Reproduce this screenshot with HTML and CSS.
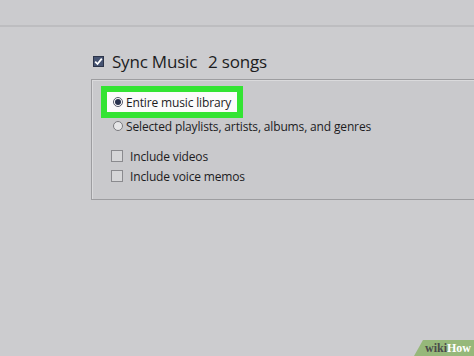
FILE: index.html
```html
<!DOCTYPE html>
<html>
<head>
<meta charset="utf-8">
<link rel="stylesheet" href="styles.css">
</head>
<body>
<div class="titlebar"></div>
<div class="main">
  <div class="sync-row">
    <span class="check checked">
      <svg width="11" height="11" viewBox="0 0 11 11"><path d="M2.2 5.6 L4.5 8 L8.8 2.6" fill="none" stroke="#fff" stroke-width="1.8"/></svg>
    </span>
    <span class="sync-label">Sync Music</span>
    <span class="sync-count">2 songs</span>
  </div>
  <div class="panel">
    <div class="highlight">
      <span class="radio on"><span class="dot"></span></span>
      <span class="opt-label">Entire music library</span>
    </div>
    <div class="opt-row radio-row">
      <span class="radio"></span>
      <span class="opt-label">Selected playlists, artists, albums, and genres</span>
    </div>
    <div class="opt-row box-row first-box">
      <span class="box"></span>
      <span class="opt-label">Include videos</span>
    </div>
    <div class="opt-row box-row">
      <span class="box"></span>
      <span class="opt-label">Include voice memos</span>
    </div>
  </div>
</div>
<div class="badge"><span class="wiki">wiki</span><span class="how">How</span></div>
</body>
</html>
```
FILE: styles.css
```css
html, body {
  margin: 0;
  padding: 0;
}
body {
  width: 474px;
  height: 356px;
  overflow: hidden;
  background: #cccccf;
  font-family: "Open Sans", "Noto Sans", sans-serif;
  color: #1c1c1e;
  position: relative;
}
.titlebar {
  height: 25px;
  background: #cbcbce;
  border-bottom: 2px solid #bdbdc0;
}
.main {
  padding-top: 24px;
}
.sync-row {
  display: flex;
  align-items: center;
  margin-left: 93px;
  height: 20px;
}
.check {
  width: 11px;
  height: 11px;
  box-sizing: border-box;
  display: inline-flex;
  border: 1px solid #2c3449;
  background: #465372;
}
.check svg { display: block; margin: -1px; }
.sync-label {
  font-size: 17px;
  margin-left: 8px;
  letter-spacing: -0.2px;
}
.sync-count {
  font-size: 17px;
  margin-left: 11px;
  letter-spacing: -0.2px;
}
.panel {
  margin-top: 8px;
  margin-left: 91px;
  height: 121px;
  border: 1px solid #9d9da0;
  border-right: none;
  box-shadow: inset 1px 1px 0 #dadadc;
  background: #c9c9cc;
  box-sizing: border-box;
  padding-top: 6px;
  padding-left: 9px;
}
.highlight {
  display: flex;
  align-items: center;
  width: 142px;
  height: 32px;
  box-sizing: border-box;
  border: 6px solid #33e433;
  background: #fbfbfb;
  padding-left: 6px;
}
.opt-label {
  font-size: 12px;
  letter-spacing: -0.15px;
  white-space: nowrap;
}
.highlight .opt-label {
  margin-left: 3px;
}
.radio {
  width: 10px;
  height: 10px;
  border-radius: 50%;
  border: 1px solid #7a7a7e;
  background: #e6e6e8;
  box-sizing: border-box;
  display: inline-flex;
  align-items: center;
  justify-content: center;
  flex: none;
}
.radio.on {
  background: #ffffff;
  border-color: #55596a;
}
.dot {
  width: 6px;
  height: 6px;
  border-radius: 50%;
  background: #28324d;
}
.opt-row {
  display: flex;
  align-items: center;
}
.radio-row {
  margin-left: 12px;
  height: 16px;
}
.radio-row .opt-label { margin-left: 3px; }
.box-row {
  margin-left: 10px;
  height: 20px;
}
.first-box { margin-top: 12px; }
.box {
  width: 12px;
  height: 12px;
  box-sizing: border-box;
  border: 1px solid #8a8a8e;
  background: #d6d6d8;
  flex: none;
}
.box-row .opt-label { margin-left: 7px; }
.badge {
  position: absolute;
  right: 0;
  bottom: 0;
  height: 16px;
  width: 60px;
  background: #96b87a;
  clip-path: polygon(9px 0, 100% 0, 100% 100%, 0 100%);
  font-family: "Liberation Serif", "DejaVu Serif", serif;
  font-size: 12px;
  font-weight: bold;
  line-height: 16px;
  padding-left: 11px;
  box-sizing: border-box;
  white-space: nowrap;
}
.wiki { color: #4a4a4a; }
.how { color: #ffffff; }
```
